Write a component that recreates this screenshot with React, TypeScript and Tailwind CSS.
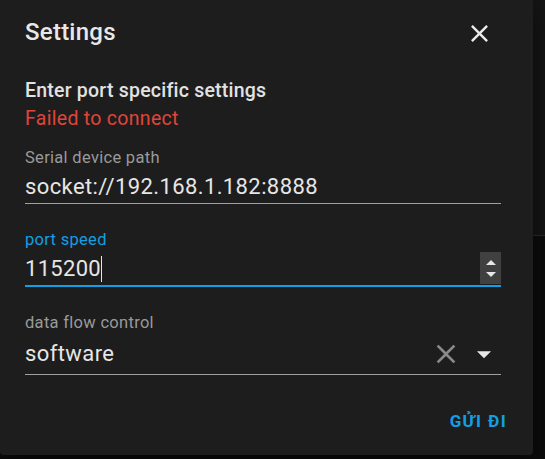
import React from "react";

function CloseIcon({ className }: { className?: string }) {
  return (
    <svg viewBox="0 0 24 24" className={className} fill="currentColor">
      <path d="M19 6.41 17.59 5 12 10.59 6.41 5 5 6.41 10.59 12 5 17.59 6.41 19 12 13.41 17.59 19 19 17.59 13.41 12z" />
    </svg>
  );
}

function ArrowDropDown({ className }: { className?: string }) {
  return (
    <svg viewBox="0 0 24 24" className={className} fill="currentColor">
      <path d="M7 10l5 5 5-5z" />
    </svg>
  );
}

export default function App() {
  return (
    <div className="relative w-[545px] h-[459px] overflow-hidden bg-[#0c0c0c] font-['Roboto',sans-serif]">
      <div className="h-[236px] bg-[#151515] border-b border-[#2a2a2a]" />

      <div className="absolute left-0 top-0 w-[533px] h-[455px] bg-[#1d1d1d] rounded-b-[4px] shadow-[0_8px_24px_rgba(0,0,0,0.5)]">
        {/* header */}
        <div className="flex items-start justify-between pl-[25px] pr-[39px] pt-[16px]">
          <h2 className="text-[24px] leading-[32px] font-medium tracking-[0.25px] text-[#e8e8e8]">Settings</h2>
          <CloseIcon className="mt-[3px] w-[29px] h-[29px] text-[#ececec]" />
        </div>

        {/* body */}
        <div className="pl-[25px] pr-[32px]">
          <p className="mt-[31px] text-[19.5px] leading-[24px] font-medium tracking-[0.22px] text-[#e2e2e2]">
            Enter port specific settings
          </p>
          <p className="mt-[4px] text-[19.5px] leading-[24px] tracking-[0.3px] text-[#e0453a]">Failed to connect</p>

          {/* field 1 */}
          <div className="mt-[17px]">
            <div className="text-[16.5px] leading-[20px] tracking-[0.3px] text-[#9a9a9a]">Serial device path</div>
            <div className="mt-[5px] pb-[2px] border-b border-[#a0a0a0]">
              <div className="text-[22px] leading-[28px] tracking-[0.4px] text-[#e6e6e6]">socket://192.168.1.182:8888</div>
            </div>
          </div>

          {/* field 2 */}
          <div className="mt-[26px]">
            <div className="text-[16.5px] leading-[20px] tracking-[0.3px] text-[#129fe6]">port speed</div>
            <div className="mt-[5px] pb-[2px] border-b-2 border-[#129fe6]">
              <div className="flex items-center h-[28px]">
                <span className="text-[22px] leading-[28px] tracking-[0.3px] text-[#e6e6e6]">115200</span>
                <span className="w-px h-[26px] bg-[#e6e6e6]" />
                <div className="ml-auto -mt-[2px] w-[21px] h-[32px] bg-[#404040] flex flex-col items-center justify-center gap-[7px]">
                  <span className="w-0 h-0 border-l-[5px] border-r-[5px] border-b-[5px] border-l-transparent border-r-transparent border-b-[#e8e8e8]" />
                  <span className="w-0 h-0 border-l-[5px] border-r-[5px] border-t-[5px] border-l-transparent border-r-transparent border-t-[#e8e8e8]" />
                </div>
              </div>
            </div>
          </div>

          {/* field 3 */}
          <div className="mt-[26px]">
            <div className="text-[16.5px] leading-[20px] tracking-[0.3px] text-[#9a9a9a]">data flow control</div>
            <div className="mt-[7px] pb-[6px] border-b border-[#a0a0a0]">
              <div className="flex items-center h-[28px]">
                <span className="flex-1 text-[22px] leading-[28px] tracking-[0.4px] text-[#e6e6e6]">software</span>
                <CloseIcon className="w-[32px] h-[32px] text-[#8a8a8a]" />
                <ArrowDropDown className="ml-[5px] w-[34px] h-[34px] text-[#e6e6e6]" />
              </div>
            </div>
          </div>
        </div>

        {/* actions */}
        <div className="flex justify-end pr-[26px] mt-[36px]">
          <span className="text-[17px] leading-[20px] font-bold tracking-[0.08em] text-[#129fe6]">GỬI ĐI</span>
        </div>
      </div>
    </div>
  );
}
